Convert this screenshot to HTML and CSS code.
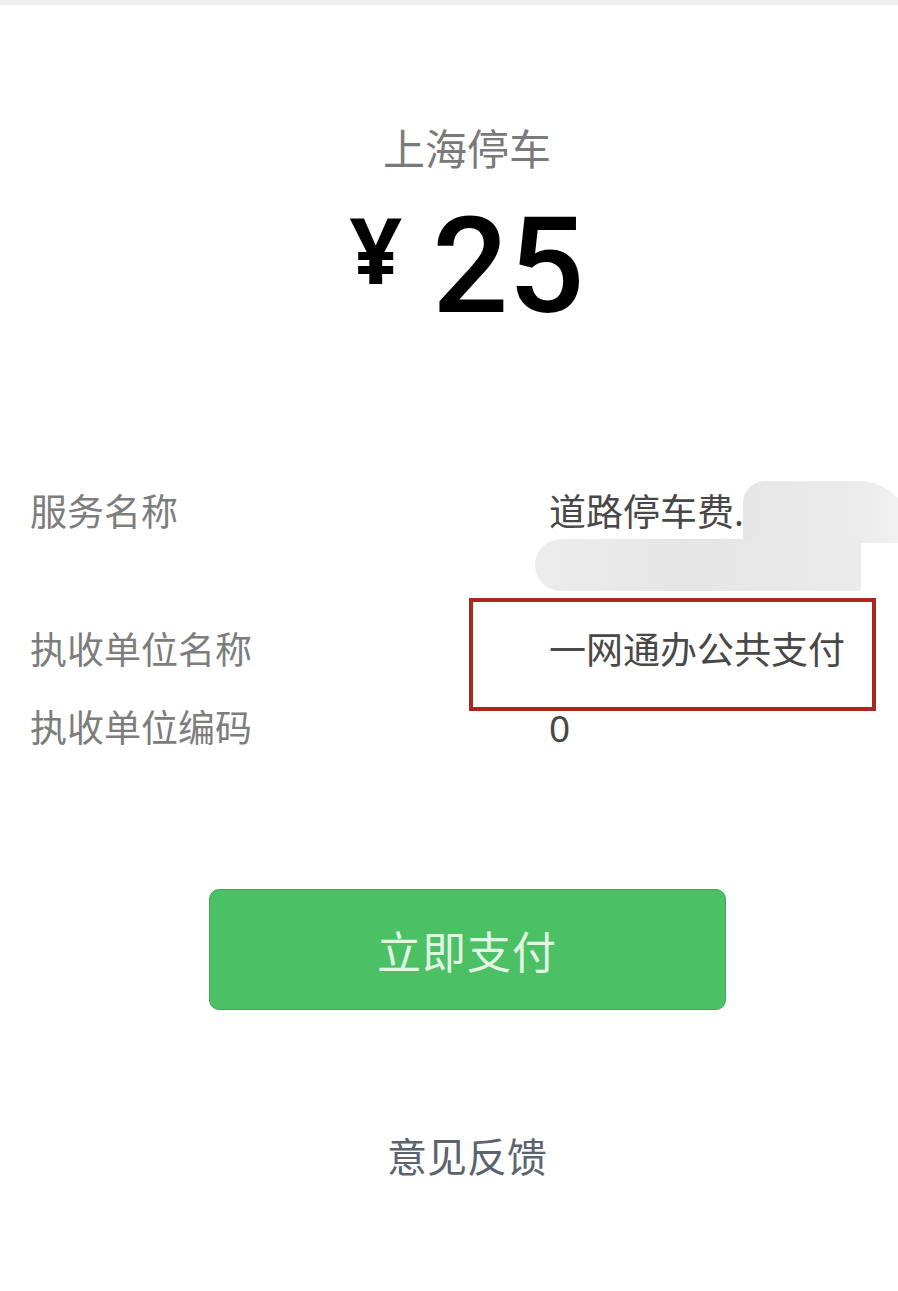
FILE: index.html
```html
<!DOCTYPE html>
<html lang="zh-CN">
<head>
  <meta charset="UTF-8">
  <meta name="viewport" content="width=device-width, initial-scale=1.0">
  <title>上海停车</title>
  <link rel="stylesheet" href="styles.css">
</head>
<body>
  <div class="topbar"></div>

  <div class="header">
    <div class="merchant">上海停车</div>
    <div class="amount">
      <span class="currency">¥</span>
      <span class="sum">25</span>
    </div>
  </div>

  <div class="info">
    <div class="row row-tall">
      <div class="label">服务名称</div>
      <div class="value">道路停车费.</div>
      <!-- 打码区域 -->
      <div class="smear smear-top"></div>
      <div class="smear smear-bottom"></div>
    </div>
    <div class="row">
      <div class="label">执收单位名称</div>
      <div class="value">一网通办公共支付</div>
      <div class="mark"></div>
    </div>
    <div class="row">
      <div class="label">执收单位编码</div>
      <div class="value">0</div>
    </div>
  </div>

  <div class="actions">
    <button class="pay" type="button">立即支付</button>
    <a class="feedback" href="#">意见反馈</a>
  </div>
</body>
</html>
```

FILE: styles.css
```css
/* 基础 */
body {
  margin: 0;
  padding: 0;
  background: #fff;
  font-family: "Noto Sans", "Noto Sans CJK SC", sans-serif;
  color: #333;
}
.topbar {
  height: 5px;
  background: #efefef;
}
/* 标题和金额 */
.header {
  padding: 119px 0 0 36px;
  display: flex;
  flex-direction: column;
  align-items: center;
}
.merchant {
  font-size: 42px;
  line-height: 50px;
  color: #7a7a7a;
}
.amount {
  margin-top: 26px;
  display: flex;
  align-items: flex-start;
  gap: 30px;
  color: #000;
}
.currency {
  margin-top: 3px;
  font-size: 92px;
  font-weight: 700;
  line-height: 92px;
}
.sum {
  font-family: Roboto, sans-serif;
  font-size: 134px;
  font-weight: 500;
  line-height: 134px;
}
/* 信息列表 */
.info {
  margin-top: 139px;
  padding: 0 30px;
}
.row {
  position: relative;
  display: grid;
  grid-template-columns: 519px 1fr;
  font-size: 37px;
  line-height: 78px;
}
.row-tall {
  padding-bottom: 60px;
}
.label {
  color: #7d7d7d;
}
.value {
  color: #484848;
}
.smear {
  position: absolute;
}
.smear-top {
  left: 713px;
  top: 8px;
  width: 170px;
  height: 62px;
  border-radius: 24px 60px 8px 4px;
  background: linear-gradient(90deg, #e6e6e6, #ececec 70%, #f3f3f3);
}
.smear-bottom {
  left: 505px;
  top: 66px;
  width: 326px;
  height: 52px;
  border-radius: 26px 4px 4px 26px;
  background: linear-gradient(90deg, #ededed, #e5e5e5 45%, #ebebeb);
}
.mark {
  position: absolute;
  left: 439px;
  top: -13px;
  width: 399px;
  height: 105px;
  border: 4px solid #a8281e;
}
/* 按钮 */
.actions {
  padding-left: 36px;
  display: flex;
  flex-direction: column;
  align-items: center;
}
.pay {
  margin-top: 122px;
  width: 517px;
  height: 121px;
  border: 1px solid #40a956;
  border-radius: 10px;
  background: #4cc065;
  color: #e2f6e4;
  font-family: "Noto Sans CJK SC", sans-serif;
  font-size: 44px;
  letter-spacing: 1px;
  cursor: pointer;
}
.feedback {
  margin-top: 122px;
  font-size: 40px;
  line-height: 50px;
  color: #5c6370;
  text-decoration: none;
}
```
